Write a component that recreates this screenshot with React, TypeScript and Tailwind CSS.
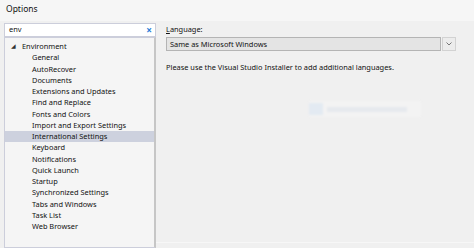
import React from 'react';

const items = [
  'General',
  'AutoRecover',
  'Documents',
  'Extensions and Updates',
  'Find and Replace',
  'Fonts and Colors',
  'Import and Export Settings',
  'International Settings',
  'Keyboard',
  'Notifications',
  'Quick Launch',
  'Startup',
  'Synchronized Settings',
  'Tabs and Windows',
  'Task List',
  'Web Browser',
];

export default function App() {
  return (
    <div
      className="w-[474px] h-[248px] overflow-hidden bg-[#f0f0f0] text-[#111] flex flex-col"
      style={{ fontFamily: '"Noto Sans", "Open Sans", sans-serif' }}
    >
      {/* Title */}
      <div className="h-[21px] bg-[#f6f6f6] pl-[6px] pt-[3px] text-[8.5px] leading-[12px]">Options</div>

      <div className="flex flex-1 min-h-0 pt-[2px]">
        {/* Left: search + tree */}
        <div className="w-[156px] pl-[4px] flex flex-col">
          <div className="h-[14px] bg-white border border-[#cccedb] flex items-center pl-[4px] pr-[3px] text-[7.4px]">
            <span className="flex-1">env</span>
            <span className="text-[#1e7ad6] text-[10px] leading-none font-bold">×</span>
          </div>
          <div className="flex-1 bg-[#f5f5f5] border border-[#cccedb] border-r-2 border-r-[#c6c6c6] pt-[3px] text-[7.4px] leading-[11.25px]">
            <div className="flex items-center pl-[6px]">
              <span className="text-[6px] mr-[6px] text-[#333]">◢</span>
              <span>Environment</span>
            </div>
            {items.map((item) => (
              <div
                key={item}
                className={`pl-[27px] ${item === 'International Settings' ? 'bg-[#cdd1de]' : ''}`}
              >
                {item}
              </div>
            ))}
          </div>
        </div>

        {/* Right: settings panel */}
        <div className="flex-1 pl-[10px] pr-[18px] pt-[1px] text-[7.4px] leading-[11px] flex flex-col border-b border-[#f7f7f7] mb-[5px]">
          <div>
            <span className="underline">L</span>anguage:
          </div>
          <div className="mt-[2px] flex h-[14px]">
            <div className="flex-1 bg-[#e4e4e4] border border-[#b4b4b4] pl-[3px] flex items-center">
              Same as Microsoft Windows
            </div>
            <div className="w-[14px] ml-[1px] bg-[#ececec] border border-[#d2d2d2] flex items-center justify-center">
              <svg width="6" height="4" viewBox="0 0 6 4">
                <path d="M0.5 0.5 L3 3 L5.5 0.5" fill="none" stroke="#777" strokeWidth="1" />
              </svg>
            </div>
          </div>
          <div className="mt-[11px]">Please use the Visual Studio Installer to add additional languages.</div>
          <div className="mt-[28px] ml-[143px] w-[112px] h-[16px] flex items-center gap-[4px] bg-[#f3f3f3] blur-[0.8px]">
            <div className="w-[14px] h-[12px] bg-[#e3eaf2]" />
            <div className="w-[80px] h-[5px] bg-[#e6e9ee]" />
          </div>
        </div>
      </div>
    </div>
  );
}
